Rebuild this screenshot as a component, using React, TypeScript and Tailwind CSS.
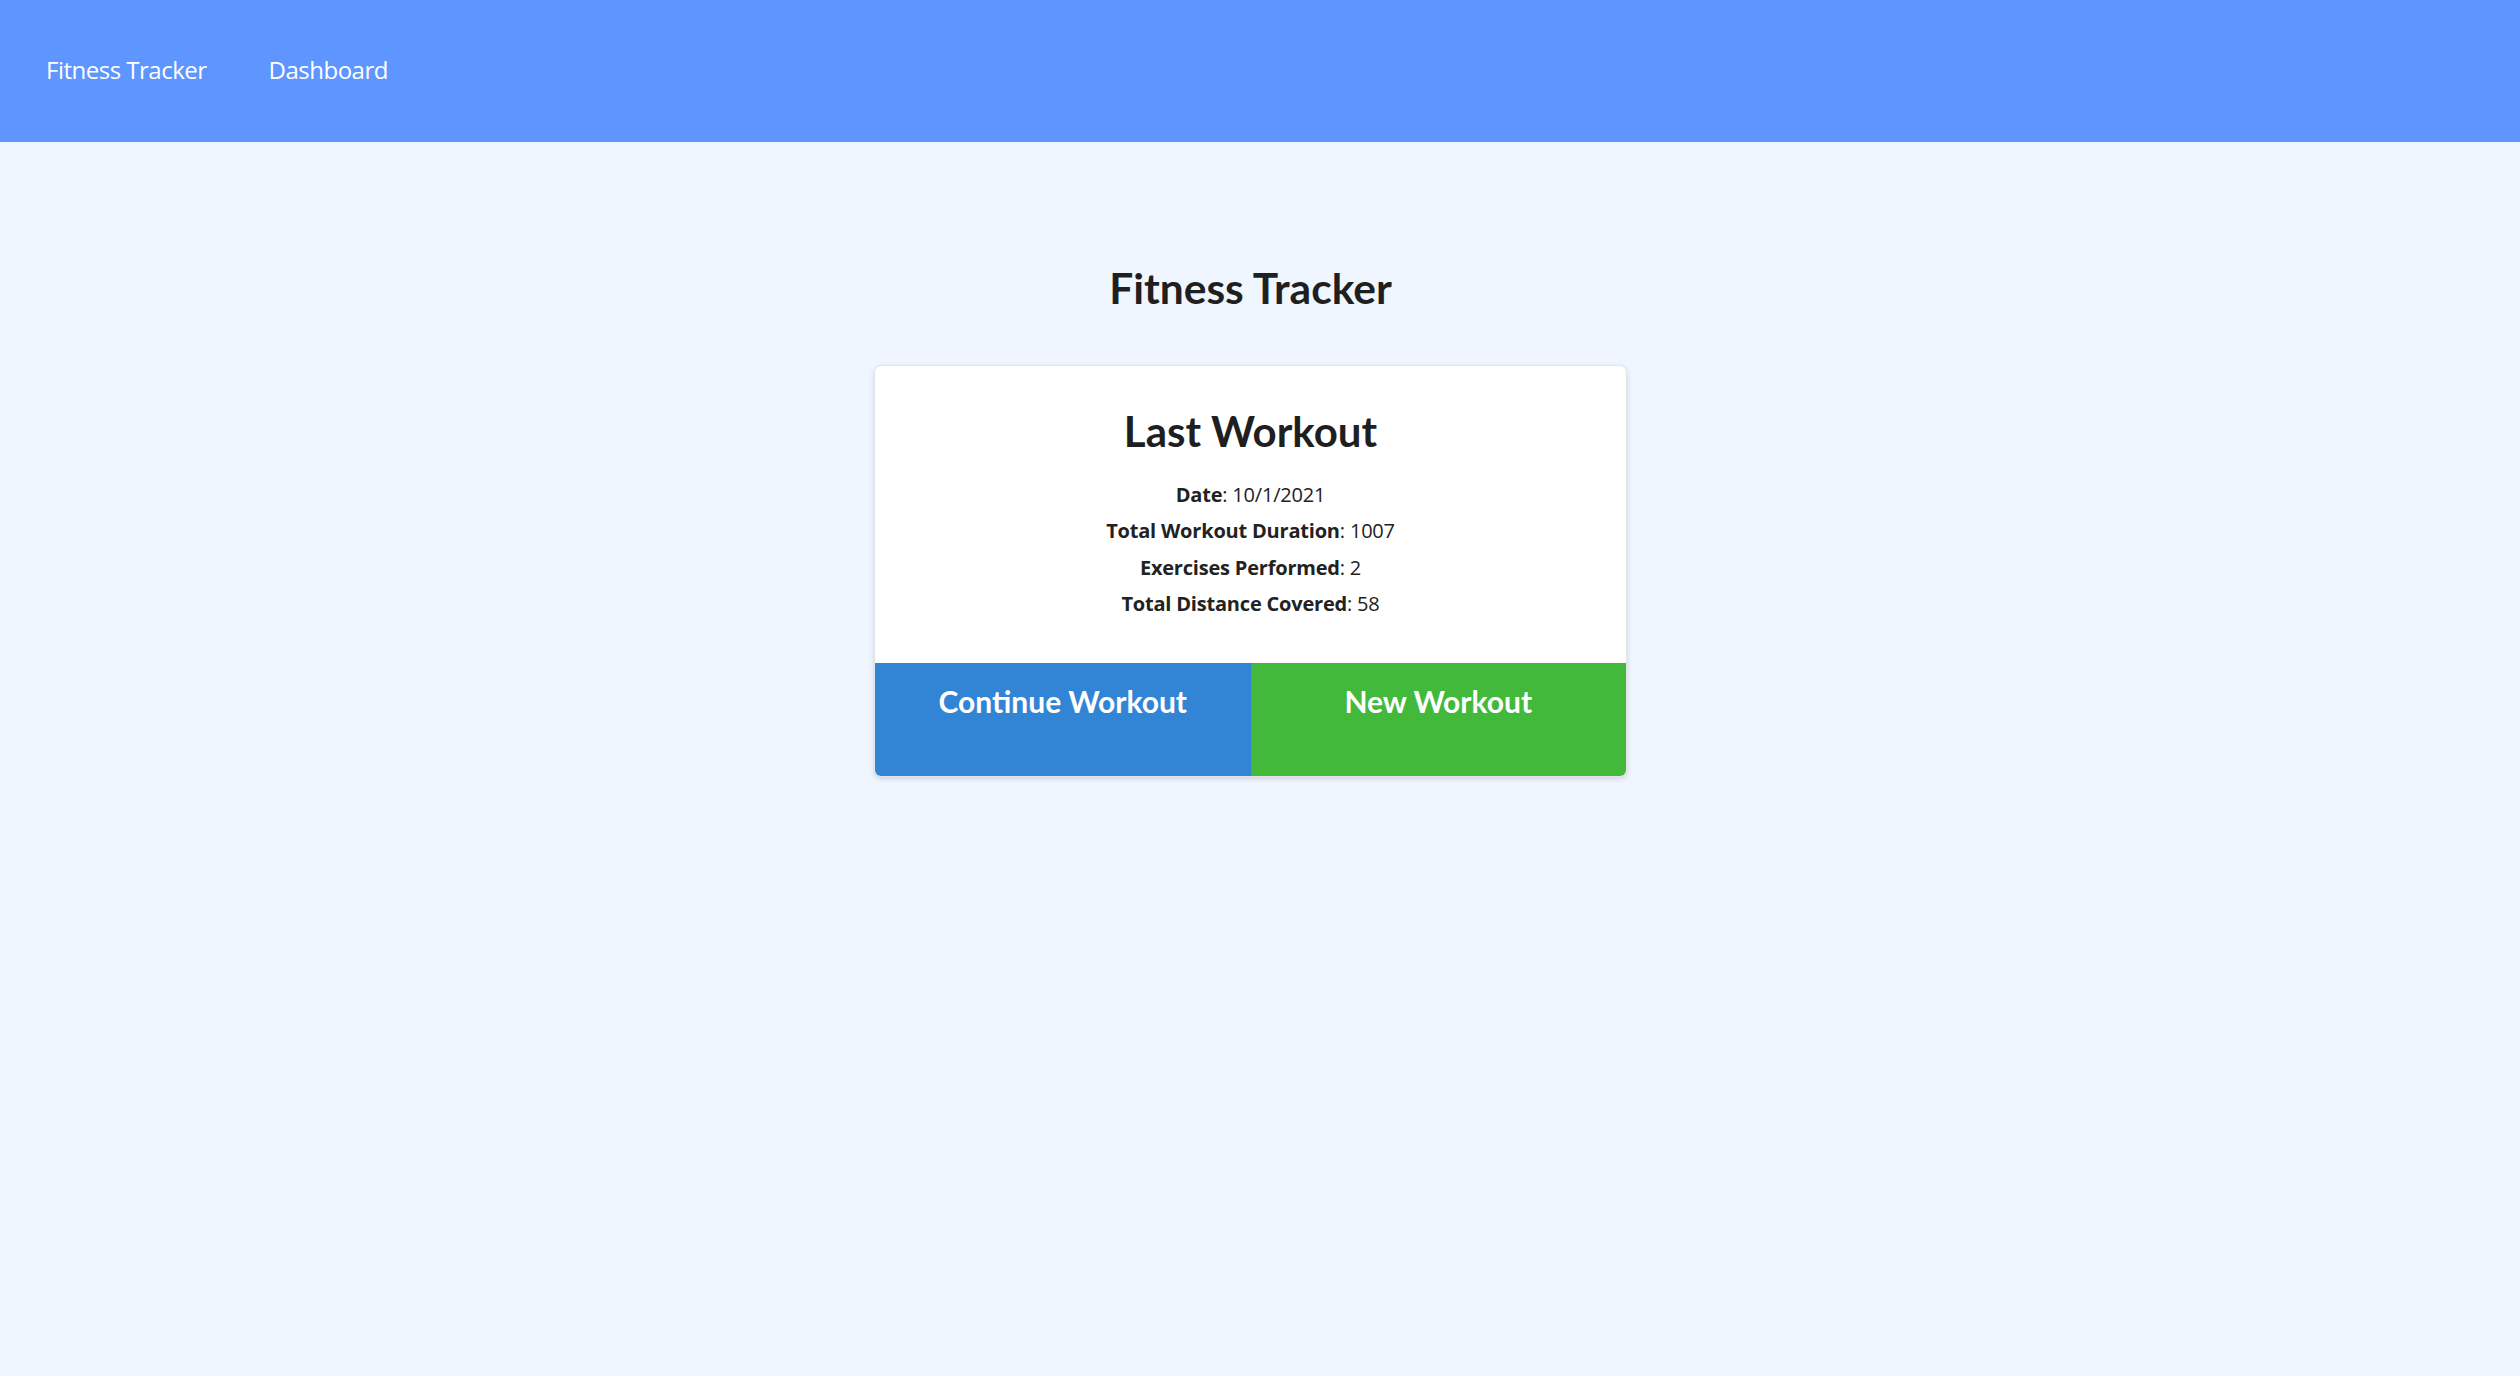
import React from "react";

const stats: { label: string; value: string }[] = [
  { label: "Date", value: "10/1/2021" },
  { label: "Total Workout Duration", value: "1007" },
  { label: "Exercises Performed", value: "2" },
  { label: "Total Distance Covered", value: "58" },
];

const uiFont = '"Open Sans", "Noto Sans", sans-serif';
const headFont = 'Lato, "Liberation Sans", sans-serif';

export default function App() {
  return (
    <div className="min-h-screen w-full bg-[#eff6ff] text-[#222222]">
      <nav
        className="flex h-[142px] items-center bg-[#5e95ff] pb-[3px] pl-[46px] text-[24px] tracking-[-0.5px] text-white"
        style={{ fontFamily: uiFont }}
      >
        <a className="leading-[34px]">Fitness Tracker</a>
        <a className="ml-[62px] leading-[34px]">Dashboard</a>
      </nav>

      <main className="flex flex-col items-center pr-[19px] pt-[121px]">
        <h1 className="text-[42.5px] font-bold leading-[50px] text-[#1f1f1f]" style={{ fontFamily: headFont }}>
          Fitness Tracker
        </h1>

        <section className="mt-[53px] w-[751px] overflow-hidden rounded-[6px] bg-white shadow-[0_2px_6px_rgba(0,0,0,0.18)] ring-1 ring-[#e2e4e8]">
          <div className="flex flex-col items-center pb-[41px] pt-[40px]">
            <h2 className="text-[42px] font-bold leading-[50px] text-[#1f1f1f]" style={{ fontFamily: headFont }}>
              Last Workout
            </h2>
            <div
              className="mt-[21px] flex flex-col items-center text-[20px] leading-[36.33px] tracking-[-0.2px]"
              style={{ fontFamily: uiFont }}
            >
              {stats.map((s) => (
                <p key={s.label}>
                  <span className="font-bold">{s.label}</span>: {s.value}
                </p>
              ))}
            </div>
          </div>
          <div
            className="grid h-[113px] grid-cols-2 text-[30px] font-bold leading-[36px] text-white"
            style={{ fontFamily: headFont }}
          >
            <button className="flex justify-center bg-[#3285d4] pt-[20px]">Continue Workout</button>
            <button className="flex justify-center bg-[#43b93b] pt-[20px]">New Workout</button>
          </div>
        </section>
      </main>
    </div>
  );
}
